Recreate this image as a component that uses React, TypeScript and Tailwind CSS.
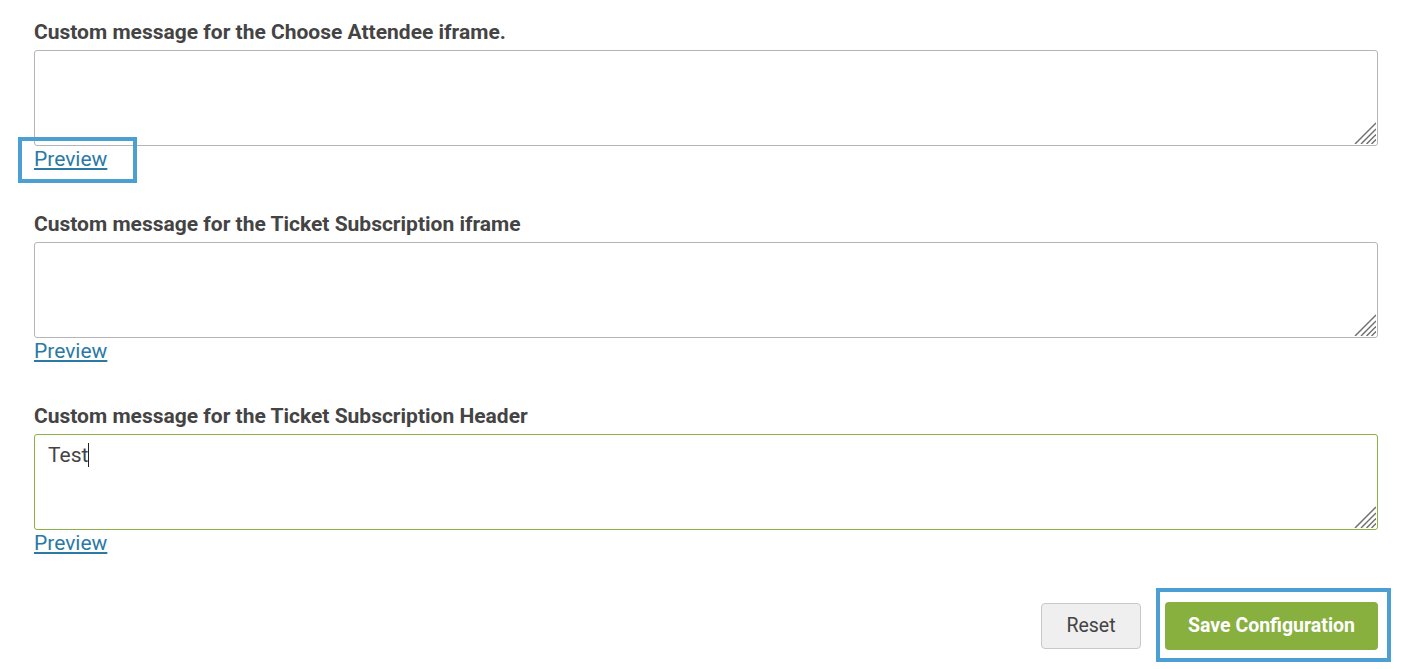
import React from "react";

const sections = [
  { key: "attendee", label: "Custom message for the Choose Attendee iframe.", value: "", focused: false, highlight: true },
  { key: "subscription", label: "Custom message for the Ticket Subscription iframe", value: "", focused: false, highlight: false },
  { key: "header", label: "Custom message for the Ticket Subscription Header", value: "Test", focused: true, highlight: false },
];

function Grip() {
  return (
    <svg className="pointer-events-none absolute bottom-[2px] right-[2px]" width="22" height="22" viewBox="0 0 22 22">
      <g stroke="#707070" strokeWidth="1.5">
        <line x1="1" y1="22" x2="22" y2="1" />
        <line x1="7" y1="22" x2="22" y2="7" />
        <line x1="12.5" y1="22" x2="22" y2="12.5" />
        <line x1="17.5" y1="22" x2="22" y2="17.5" />
      </g>
    </svg>
  );
}

export default function App() {
  return (
    <div className="flex min-h-screen flex-col bg-white pl-[34px] pr-[27px] pt-[20px] font-['Roboto',sans-serif] text-[#444]">
      <div className="flex flex-col gap-[40px]">
        {sections.map((s) => (
          <div key={s.key} className="flex flex-col items-start">
            <label className="mb-[6px] block text-[21px] font-bold leading-[24px]">{s.label}</label>
            <div className="relative w-full">
              <textarea
                readOnly
                defaultValue={s.value}
                className={
                  s.focused
                    ? "block h-[96px] w-full resize-none rounded-[3px] border border-[#8ab142] px-[13px] py-[7px] text-[21px] leading-[26px] text-[#444] outline-none"
                    : "block h-[96px] w-full resize-none rounded-[3px] border border-[#b5b5b5] px-[13px] py-[7px] text-[21px] leading-[26px] text-[#444] outline-none"
                }
              />
              <Grip />
              {s.focused && <span className="absolute left-[54px] top-[9px] h-[24px] w-px bg-[#222]" />}
            </div>
            <a href="#" className="relative block text-[21px] leading-[26px] text-[#2b7aa5] underline underline-offset-2">
              Preview
              {s.highlight && (
                <span className="absolute -left-[16px] -top-[9px] -right-[30px] -bottom-[11px] border-4 border-[#4b9fd3]" />
              )}
            </a>
          </div>
        ))}
      </div>

      <div className="mt-[46px] flex items-center justify-end gap-[24px]">
        <button className="h-[46px] w-[100px] rounded-[4px] border border-[#c8c8c8] bg-[#efefef] text-[19.5px] text-[#444]">
          Reset
        </button>
        <div className="relative">
          <button className="block h-[48px] w-[213px] rounded-[4px] bg-[#87b03f] text-[19.5px] font-bold text-white">
            Save Configuration
          </button>
          <span className="absolute -left-[9px] -top-[14px] -right-[13px] -bottom-[12px] border-4 border-[#4b9fd3]" />
        </div>
      </div>
    </div>
  );
}
